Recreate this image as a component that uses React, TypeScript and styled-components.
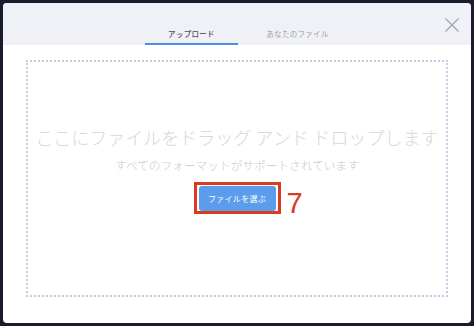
import React, { useState } from 'react'
import styled, { createGlobalStyle } from 'styled-components';

const jpFont = `"Noto Sans CJK JP", "Noto Sans", sans-serif`;

const GlobalStyle = createGlobalStyle`
  html, body {
    margin: 0;
    padding: 0;
    background: #1c1b2b;
  }
  body {
    font-family: ${jpFont};
  }
`

const tabs = ["アップロード", "あなたのファイル"];

const App: React.FC = () => {
  const [active, setActive] = useState(0);

  return (
    <>
      <GlobalStyle />
      <StyledPage>
        <StyledModal>
          <StyledHeader>
            <StyledTabs>
              {tabs.map((t, i) => (
                <StyledTab key={t} $active={i === active} onClick={() => setActive(i)}>
                  {t}
                </StyledTab>
              ))}
            </StyledTabs>
            <StyledClose aria-label="close">
              <svg width="14" height="14" viewBox="0 0 14 14">
                <path d="M0.5 0.5 L13.5 13.5 M13.5 0.5 L0.5 13.5" stroke="#a3a3a8" strokeWidth="1.2" fill="none" />
              </svg>
            </StyledClose>
          </StyledHeader>
          <StyledBody>
            <StyledDropZone>
              <StyledTitle>ここにファイルをドラッグ アンド ドロップします</StyledTitle>
              <StyledSub>すべてのフォーマットがサポートされています</StyledSub>
              <StyledHighlight>
                <StyledButton>ファイルを選ぶ</StyledButton>
                <StyledMarker>7</StyledMarker>
              </StyledHighlight>
            </StyledDropZone>
          </StyledBody>
        </StyledModal>
      </StyledPage>
    </>
  )
}

export default App;

const StyledPage = styled.div`
  width: 474px;
  height: 326px;
  padding: 3px;
  box-sizing: border-box;
`

const StyledModal = styled.div`
  display: flex;
  flex-direction: column;
  height: 320px;
  background: #ffffff;
  border-radius: 4px;
  overflow: hidden;
`

const StyledHeader = styled.div`
  display: flex;
  align-items: flex-start;
  height: 42px;
  flex-shrink: 0;
  background: #eff1f6;
  padding: 0 12px 0 142px;
`

const StyledTabs = styled.div`
  display: flex;
  align-self: flex-end;
  gap: 13px;
`

const StyledTab = styled.div<{ $active: boolean }>`
  width: 93px;
  text-align: center;
  font-size: 7.5px;
  line-height: 10px;
  letter-spacing: 0.3px;
  padding-bottom: 4px;
  color: ${p => (p.$active ? '#4d4d55' : '#a2a2a8')};
  font-weight: ${p => (p.$active ? 500 : 400)};
  border-bottom: 2px solid ${p => (p.$active ? '#4a90e2' : 'transparent')};
  cursor: pointer;
`

const StyledClose = styled.div`
  margin-left: auto;
  margin-top: 15px;
  width: 14px;
  height: 14px;
  cursor: pointer;
  svg { display: block; }
`

const StyledBody = styled.div`
  flex: 1;
  padding: 15px 23px 26px;
`

const StyledDropZone = styled.div`
  height: 100%;
  box-sizing: border-box;
  border: 2px dotted #c2cee0;
  display: flex;
  flex-direction: column;
  align-items: center;
  padding-top: 63px;
`

const StyledTitle = styled.div`
  font-size: 18px;
  line-height: 24px;
  font-weight: 300;
  color: #d8d8da;
  white-space: nowrap;
`

const StyledSub = styled.div`
  margin-top: 8px;
  font-size: 11.7px;
  line-height: 16px;
  font-weight: 300;
  color: #cacacd;
  white-space: nowrap;
`

const StyledHighlight = styled.div`
  position: relative;
  margin-top: 9px;
  padding: 1px 2px 0;
  border: 3px solid #d93a20;
`

const StyledButton = styled.button`
  display: block;
  width: 77px;
  height: 25px;
  border: none;
  border-radius: 3px;
  background: #5b9ceb;
  color: #ffffff;
  font-family: ${jpFont};
  font-size: 8px;
  letter-spacing: 0.3px;
  padding: 0;
  cursor: pointer;
`

const StyledMarker = styled.span`
  position: absolute;
  left: calc(100% + 9px);
  top: 4px;
  font-family: "Liberation Sans", Arial, sans-serif;
  font-size: 29px;
  line-height: 29px;
  color: #d93a20;
`
